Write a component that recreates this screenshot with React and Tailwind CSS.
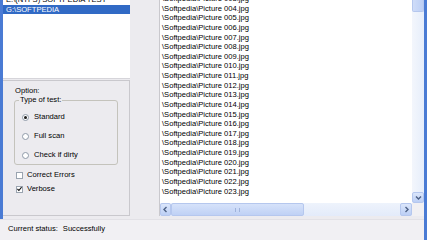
import React from "react";

const files = Array.from({ length: 21 }, (_, i) => `\\Softpedia\\Picture ${String(i + 3).padStart(3, "0")}.jpg`);

// XP-style radio button
const Radio = ({ label, checked }) => (
  <div className="flex items-center h-[10px]">
    <span className="ml-[7px] w-[7px] h-[7px] rounded-full border border-[#8f9aa8] bg-white flex items-center justify-center">
      {checked && <span className="w-[3px] h-[3px] rounded-full bg-[#1a1a1a]" />}
    </span>
    <span className="ml-[5px]">{label}</span>
  </div>
);

const Check = ({ label, checked }) => (
  <div className="flex items-center h-[10px]">
    <span className="ml-[13px] w-[7px] h-[7px] border border-[#9aa4b0] bg-white flex items-center justify-center">
      {checked && (
        <svg width="6" height="6" viewBox="0 0 6 6">
          <path d="M0.5 3 L2.3 4.8 L5.5 0.8" stroke="#111" strokeWidth="1.3" fill="none" />
        </svg>
      )}
    </span>
    <span className="ml-[4px]">{label}</span>
  </div>
);

const Chevron = ({ dir }) => {
  const d = {
    down: "M2 3.5 L4.5 6 L7 3.5",
    left: "M5.5 2 L3 4.5 L5.5 7",
    right: "M3.5 2 L6 4.5 L3.5 7",
  }[dir];
  return (
    <svg width="9" height="9" viewBox="0 0 9 9">
      <path d={d} stroke="#4d6185" strokeWidth="1.4" fill="none" />
    </svg>
  );
};

const ScrollBtn = ({ dir, className }) => (
  <div className={`flex items-center justify-center rounded-[2px] border border-[#b5c7ee] bg-gradient-to-b from-[#dbe6fb] to-[#bccff5] ${className}`}>
    <Chevron dir={dir} />
  </div>
);

export default function App() {
  return (
    <div className="w-[427px] h-[240px] overflow-hidden flex bg-[#ecebef] text-[7.6px] text-black" style={{ fontFamily: '"Liberation Sans", Arial, sans-serif' }}>
      <div className="flex-1 flex flex-col">
        <div className="h-[219px] flex">
          <div className="w-[3px] bg-[#4a7bd4]" />

          {/* left column */}
          <div className="w-[127px] flex flex-col">
            <div className="h-[79px] bg-white overflow-hidden border-b border-[#d6d5da]">
              <div className="mt-[-5px]">
                <div className="h-[9.6px] leading-[9.6px] pl-[3px] whitespace-nowrap">E:\(NTFS) SOFTPEDIA TEST</div>
                <div className="h-[9.6px] leading-[9.6px] pl-[3px] bg-[#316ac5] text-white">G:\SOFTPEDIA</div>
              </div>
            </div>

            <div className="mt-[1px] h-[136px] border border-[#c9c8cd] border-l-0 pt-[5px] pl-[12px]">
              <div className="leading-[10px]">Option:</div>
              <div className="relative mt-[4px] ml-[-1px] w-[104px] h-[65px] border border-[#c4c3bc] rounded-[3px] pt-[11px]">
                <span className="absolute top-[-6px] left-[4px] px-[1px] bg-[#ecebef] leading-[10px]">Type of test:</span>
                <div className="flex flex-col gap-[9px]">
                  <Radio label="Standard" checked />
                  <Radio label="Full scan" />
                  <Radio label="Check if dirty" />
                </div>
              </div>
              <div className="mt-[5px] flex flex-col gap-[4px] ml-[-12px]">
                <Check label="Correct Errors" />
                <Check label="Verbose" checked />
              </div>
            </div>
          </div>

          <div className="w-[29px]" />

          {/* right list */}
          <div className="flex-1 h-[216px] flex flex-col bg-white border-l border-[#c9c8cd]">
            <div className="flex-1 flex min-h-0">
              <div className="flex-1 overflow-hidden pl-[2px]">
                <div className="mt-[-6px]">
                  {files.map((f) => (
                    <div key={f} className="h-[9.63px] leading-[9.63px] whitespace-nowrap">{f}</div>
                  ))}
                </div>
              </div>
              <div className="w-[12px] flex flex-col bg-gradient-to-r from-[#f3f6fc] to-[#e6eefb]">
                <div className="h-[12px] rounded-b-[2px] border border-t-0 border-[#b5c7ee] bg-gradient-to-r from-[#cfdcf8] to-[#bccff5]" />
                <div className="flex-1" />
                <ScrollBtn dir="down" className="h-[11px]" />
              </div>
            </div>
            <div className="h-[13px] flex bg-gradient-to-b from-[#eef3fc] to-[#e3ebfa]">
              <ScrollBtn dir="left" className="w-[11px]" />
              <div className="w-[133px] rounded-[2px] border border-[#b5c7ee] bg-gradient-to-b from-[#d6e2fa] to-[#bfd1f5] flex items-center justify-center">
                <div className="w-[5px] h-[4px] border-x border-[#9fb3dc]" />
              </div>
              <div className="flex-1" />
              <ScrollBtn dir="right" className="w-[12px]" />
              <div className="w-[12px] bg-[#f1f0f3]" />
            </div>
          </div>
        </div>

        {/* status bar */}
        <div className="flex-1 bg-[#f1f0f3] border-t border-[#e2e1e6] flex items-center pl-[8px] pb-[2px]">
          <span>Current status:</span>
          <span className="ml-[5px]">Successfully</span>
        </div>
      </div>
      <div className="w-[3px] bg-[#4a7bd4]" />
    </div>
  );
}
